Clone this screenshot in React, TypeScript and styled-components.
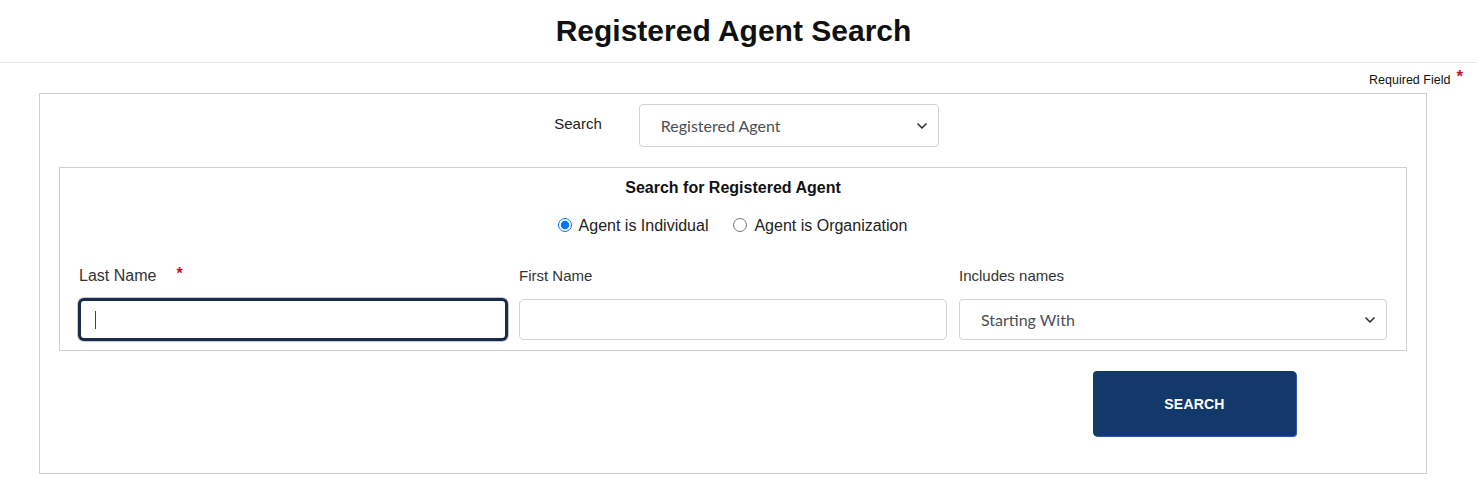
import React from 'react';
import styled, { createGlobalStyle } from 'styled-components';
import { ChevronDown } from 'lucide-react';

const GlobalStyle = createGlobalStyle`
  body {
    margin: 0;
    background: #fff;
    font-family: "Liberation Sans", Arial, sans-serif;
    color: #333;
  }
  * { box-sizing: border-box; }
`;

const Header = styled.header`
  height: 63px;
  border-bottom: 1px solid #e6e6e6;
  display: flex;
  align-items: center;
  justify-content: center;
  padding-right: 10px;
`;

const Title = styled.h1`
  margin: 0;
  font-size: 30px;
  font-weight: bold;
  color: #111;
`;

const RequiredRow = styled.div`
  height: 30px;
  display: flex;
  justify-content: flex-end;
  padding: 5px 14px 0 0;
`;

const RequiredText = styled.span`
  font-size: 12.5px;
  color: #111;
  line-height: 24px;
`;

const Star = styled.span<{ $size?: number; $gap?: number }>`
  color: #c8102e;
  font-weight: bold;
  font-size: ${p => p.$size || 16}px;
  line-height: 1;
  margin-left: ${p => p.$gap || 6}px;
  align-self: flex-start;
`;

const OuterBox = styled.div`
  margin-left: 39px;
  width: 1388px;
  height: 381px;
  border: 1px solid #cfcfcf;
  padding: 10px 19px 0 19px;
`;

const SearchRow = styled.div`
  display: flex;
  justify-content: center;
  align-items: center;
  gap: 37px;
  padding-left: 27px;
  margin-bottom: 20px;
`;

const RowLabel = styled.label`
  font-size: 15px;
  color: #222;
  margin-top: -4px;
`;

const SelectWrap = styled.div<{ $width?: number }>`
  position: relative;
  width: ${p => (p.$width ? `${p.$width}px` : '100%')};
`;

const Select = styled.select<{ $height: number }>`
  appearance: none;
  width: 100%;
  height: ${p => p.$height}px;
  border: 1px solid #d2d2d2;
  border-radius: 4px;
  background: #fff;
  padding: 0 30px 0 21px;
  font-family: Lato, "Open Sans", sans-serif;
  font-size: 16px;
  color: #4a4f57;
`;

const Chevron = styled(ChevronDown)`
  position: absolute;
  right: 9px;
  top: 50%;
  transform: translateY(-50%);
  color: #333;
  pointer-events: none;
`;

const InnerBox = styled.div`
  border: 1px solid #cfcfcf;
  padding: 10px 19px 10px;
`;

const InnerTitle = styled.div`
  text-align: center;
  font-weight: bold;
  font-size: 16px;
  line-height: 20px;
  color: #111;
`;

const RadioRow = styled.div`
  display: flex;
  justify-content: center;
  gap: 25px;
  margin-top: 18px;
  padding-right: 1px;
  font-size: 16px;
  line-height: 20px;
  color: #222;
`;

const RadioLabel = styled.label`
  display: flex;
  align-items: center;

  input {
    margin: 0 7px 3px 0;
    width: 14px;
    height: 14px;
  }
`;

const FieldGrid = styled.div`
  display: grid;
  grid-template-columns: repeat(3, 1fr);
  column-gap: 12px;
  margin-top: 30px;
`;

const Field = styled.div`
  display: flex;
  flex-direction: column;
  gap: 13px;
`;

const FieldLabel = styled.div<{ $size: number }>`
  display: flex;
  font-size: ${p => p.$size}px;
  line-height: 20px;
  color: #333;
`;

const InputWrap = styled.div`
  position: relative;
`;

const TextInput = styled.input<{ $focused?: boolean }>`
  width: 100%;
  height: 41px;
  border: ${p => (p.$focused ? '2px solid #1a2a47' : '1px solid #d2d2d2')};
  border-radius: 5px;
  box-shadow: ${p => (p.$focused ? '0 0 0 1px #1a2a47, 0 0 0 2px #c6c9cf' : 'none')};
  outline: none;
  padding: 0 16px;
  font-family: "Liberation Sans", Arial, sans-serif;
  font-size: 16px;
`;

const Caret = styled.span`
  position: absolute;
  left: 16px;
  top: 12px;
  width: 1px;
  height: 18px;
  background: #444;
`;

const ButtonRow = styled.div`
  display: flex;
  justify-content: flex-end;
  padding-right: 111px;
  margin-top: 20px;
`;

const SearchButton = styled.button`
  width: 203px;
  height: 65px;
  background: #13386a;
  border: none;
  border-radius: 4px;
  box-shadow: 1px 1px 0 #2b5aa6;
  color: #fff;
  font-family: "Liberation Sans", Arial, sans-serif;
  font-weight: bold;
  font-size: 14px;
  letter-spacing: 0.2px;
`;

export default function App() {
  return (
    <>
      <GlobalStyle />
      <Header>
        <Title>Registered Agent Search</Title>
      </Header>
      <RequiredRow>
        <RequiredText>Required Field</RequiredText>
        <Star $size={17}>*</Star>
      </RequiredRow>
      <OuterBox>
        <SearchRow>
          <RowLabel>Search</RowLabel>
          <SelectWrap $width={300}>
            <Select $height={43} defaultValue="agent">
              <option value="agent">Registered Agent</option>
            </Select>
            <Chevron size={16} strokeWidth={2.5} />
          </SelectWrap>
        </SearchRow>
        <InnerBox>
          <InnerTitle>Search for Registered Agent</InnerTitle>
          <RadioRow>
            <RadioLabel>
              <input type="radio" name="agentType" defaultChecked />
              Agent is Individual
            </RadioLabel>
            <RadioLabel>
              <input type="radio" name="agentType" />
              Agent is Organization
            </RadioLabel>
          </RadioRow>
          <FieldGrid>
            <Field>
              <FieldLabel $size={16}>
                Last Name
                <Star $size={16} $gap={20}>*</Star>
              </FieldLabel>
              <InputWrap>
                <TextInput $focused type="text" />
                <Caret />
              </InputWrap>
            </Field>
            <Field>
              <FieldLabel $size={15}>First Name</FieldLabel>
              <TextInput type="text" />
            </Field>
            <Field>
              <FieldLabel $size={15}>Includes names</FieldLabel>
              <SelectWrap>
                <Select $height={41} defaultValue="start">
                  <option value="start">Starting With</option>
                </Select>
                <Chevron size={16} strokeWidth={2.5} />
              </SelectWrap>
            </Field>
          </FieldGrid>
        </InnerBox>
        <ButtonRow>
          <SearchButton>SEARCH</SearchButton>
        </ButtonRow>
      </OuterBox>
    </>
  );
}
